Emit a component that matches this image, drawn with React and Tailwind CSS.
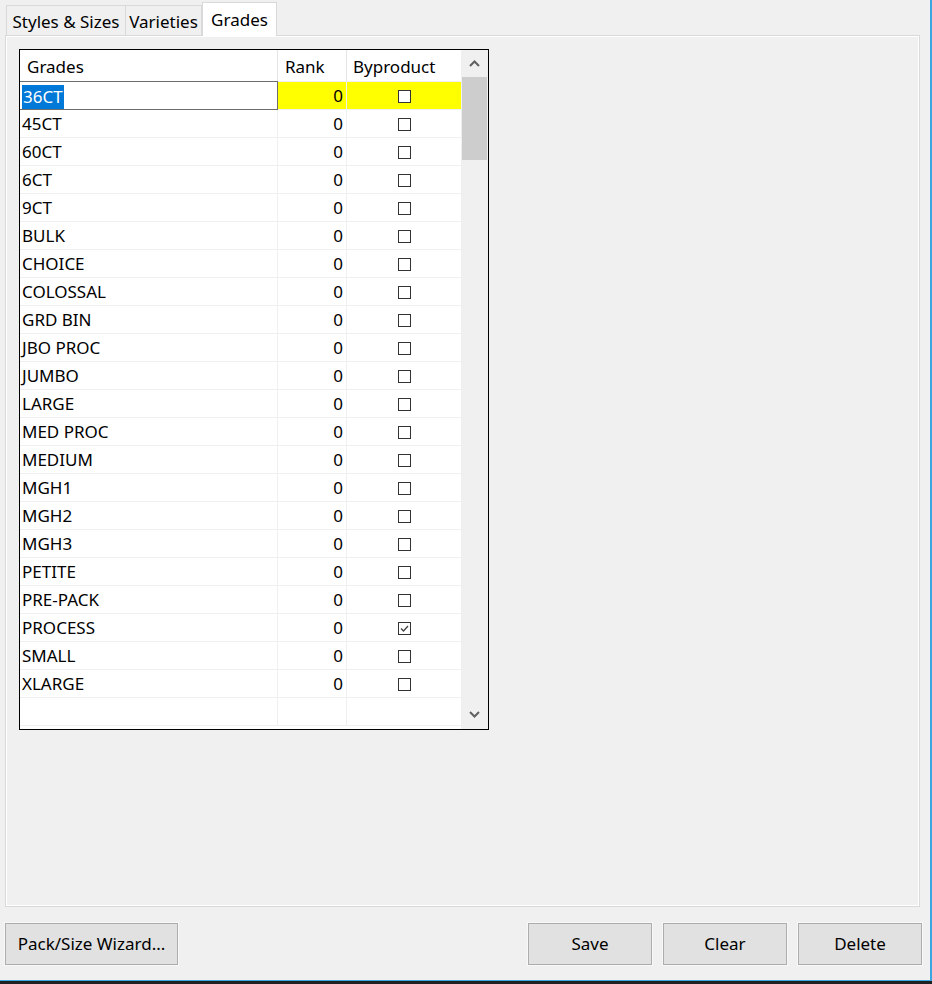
import React from 'react';

const grades = [
  '36CT', '45CT', '60CT', '6CT', '9CT', 'BULK', 'CHOICE', 'COLOSSAL', 'GRD BIN', 'JBO PROC',
  'JUMBO', 'LARGE', 'MED PROC', 'MEDIUM', 'MGH1', 'MGH2', 'MGH3', 'PETITE', 'PRE-PACK',
  'PROCESS', 'SMALL', 'XLARGE',
];

const CheckBox = ({ checked }) => (
  <span className="w-[13px] h-[13px] border border-[#333333] bg-white flex items-center justify-center">
    {checked && (
      <svg width="9" height="9" viewBox="0 0 9 9">
        <path d="M1 4.5 L3.5 7 L8 2" fill="none" stroke="#444" strokeWidth="1.3" />
      </svg>
    )}
  </span>
);

const Chevron = ({ down }) => (
  <svg width="11" height="7" viewBox="0 0 11 7">
    <path d={down ? 'M1 1 L5.5 5.5 L10 1' : 'M1 6 L5.5 1.5 L10 6'} fill="none" stroke="#606060" strokeWidth="2" />
  </svg>
);

const Button = ({ children, className }) => (
  <button type="button" className={`h-[42px] border border-[#adadad] bg-[#e1e1e1] text-[17px] text-black outline outline-1 outline-[#f8f8f8] ${className}`}>
    {children}
  </button>
);

export default function App() {
  return (
    <div className="w-[932px] h-[984px] bg-[#f0f0f0] flex flex-col overflow-hidden text-black" style={{ fontFamily: '"Noto Sans", sans-serif' }}>
      <div className="flex-1 flex flex-col border-r-2 border-[#3aa7e0]">
        {/* tabs */}
        <div className="flex items-end h-[35px] pl-[6px] text-[17px] relative z-10">
          <div className="h-[30px] w-[120px] border border-b-0 border-[#d9d9d9] flex items-center justify-center pt-[2px]">Styles &amp; Sizes</div>
          <div className="h-[30px] w-[76px] border border-b-0 border-l-0 border-[#d9d9d9] flex items-center justify-center pt-[2px]">Varieties</div>
          <div className="h-[34px] w-[75px] -mb-[1px] border border-b-0 border-[#d9d9d9] bg-white flex items-center justify-center">Grades</div>
        </div>

        {/* tab page */}
        <div className="ml-[5px] w-[915px] h-[872px] border border-[#d9d9d9]">
          <div className="w-full h-full border border-white pl-[12px] pt-[12px]">
            <div className="w-[470px] h-[681px] border border-black bg-white flex text-[17px]">
              <div className="w-[441px] flex flex-col overflow-hidden">
                <div className="flex h-[32px] shrink-0 border-b border-[#f0f0f0]">
                  <div className="w-[258px] border-r border-[#e5e5e5] pl-[7px] pt-[2px] flex items-center">Grades</div>
                  <div className="w-[69px] border-r border-[#e5e5e5] pl-[7px] pt-[2px] flex items-center">Rank</div>
                  <div className="w-[114px] pl-[6px] pt-[2px] flex items-center">Byproduct</div>
                </div>
                {grades.map((g, i) => (
                  <div key={g} className="flex h-[28px] shrink-0 border-b border-[#f0f0f0]">
                    {i === 0 ? (
                      <div className="w-[258px] border border-l-0 border-[#6d6d6d] -mt-[1px] h-[29px] flex items-center pl-[2px] pt-[2px]">
                        <span className="bg-[#0078d7] text-white px-[1px] leading-[24px]">{g}</span>
                      </div>
                    ) : (
                      <div className="w-[258px] border-r border-[#f0f0f0] pl-[2px] pt-[1px] flex items-center">{g}</div>
                    )}
                    <div className={`w-[69px] border-r border-[#f0f0f0] pr-[3px] pt-[1px] flex items-center justify-end ${i === 0 ? 'bg-[#ffff00]' : ''}`}>0</div>
                    <div className={`w-[114px] pt-[2px] flex items-center justify-center ${i === 0 ? 'bg-[#ffff00]' : ''}`}>
                      <CheckBox checked={g === 'PROCESS'} />
                    </div>
                  </div>
                ))}
                <div className="flex h-[28px] shrink-0 border-b border-[#f0f0f0]">
                  <div className="w-[258px] border-r border-[#f0f0f0]"></div>
                  <div className="w-[69px] border-r border-[#f0f0f0]"></div>
                  <div className="w-[114px]"></div>
                </div>
              </div>
              <div className="w-[27px] bg-[#f0f0f0] flex flex-col items-center">
                <div className="h-[27px] w-full flex items-center justify-center">
                  <Chevron />
                </div>
                <div className="h-[83px] w-[25px] bg-[#cdcdcd]"></div>
                <div className="flex-1"></div>
                <div className="h-[27px] w-full flex items-center justify-center pb-[2px]">
                  <Chevron down />
                </div>
              </div>
            </div>
          </div>
        </div>

        {/* buttons */}
        <div className="flex pl-[5px] pr-[8px] pt-[16px]">
          <Button className="w-[173px]">Pack/Size Wizard...</Button>
          <div className="ml-auto flex gap-[11px]">
            <Button className="w-[124px]">Save</Button>
            <Button className="w-[124px]">Clear</Button>
            <Button className="w-[124px]">Delete</Button>
          </div>
        </div>
        <div className="flex-1"></div>
      </div>
      <div className="h-[1px] bg-[#3aa7e0] shrink-0"></div>
      <div className="h-[3px] bg-[#1f1f1f] shrink-0"></div>
    </div>
  );
}
